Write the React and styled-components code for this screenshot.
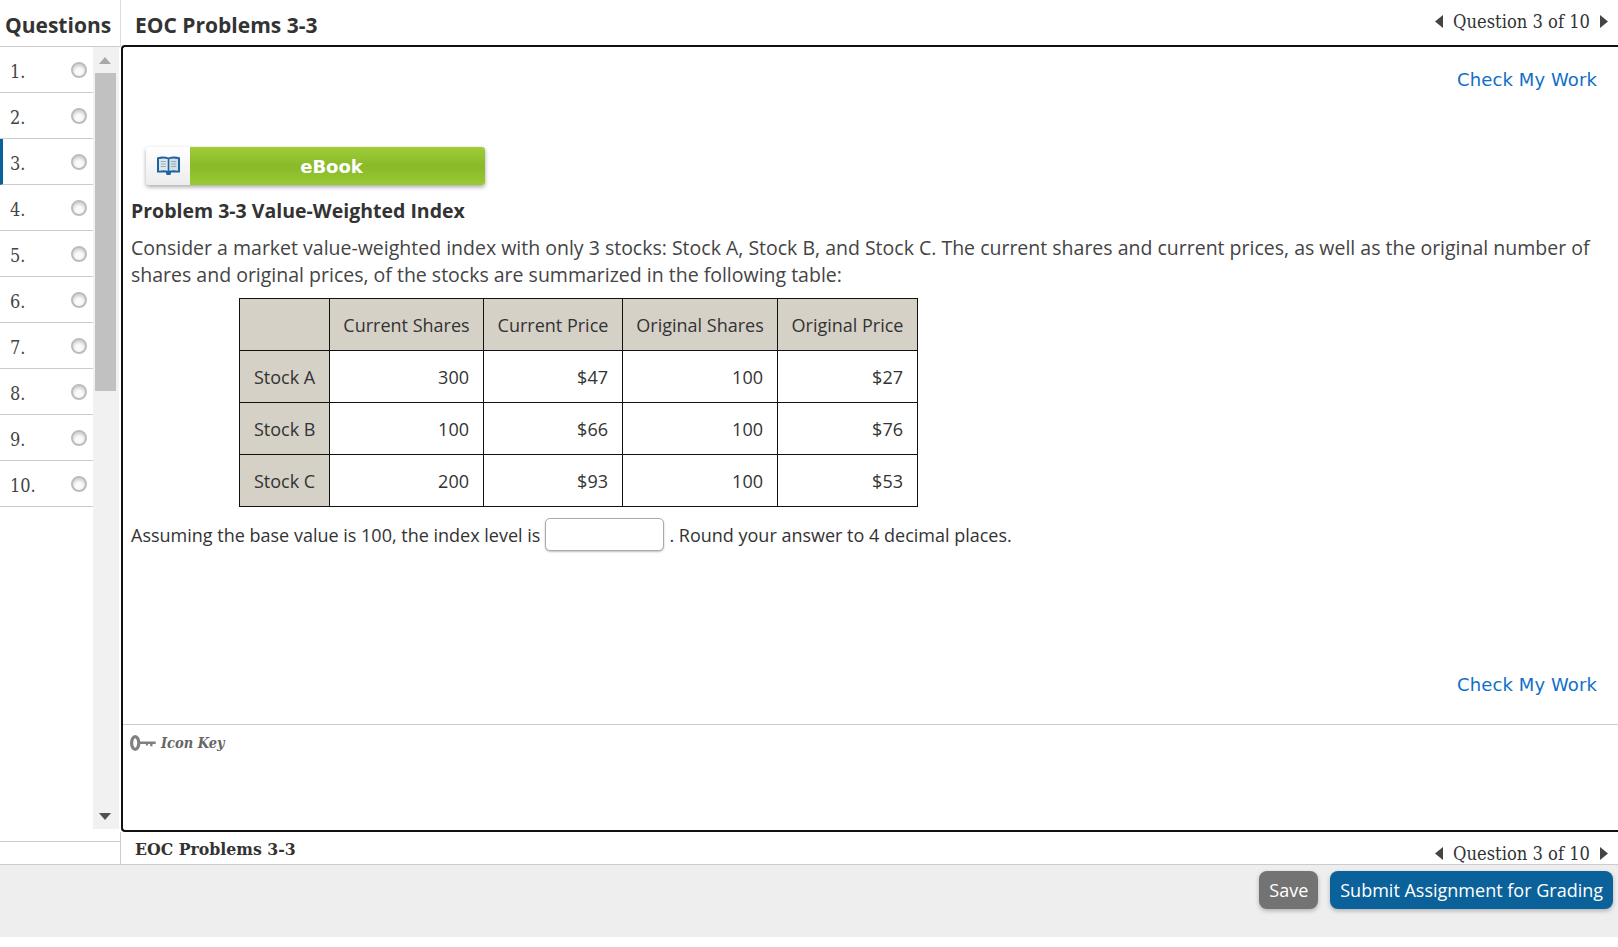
import React from "react";
import styled, { createGlobalStyle } from "styled-components";

const Global = createGlobalStyle`
  html, body { margin: 0; padding: 0; background: #fff; overflow: hidden; }
  #root { height: 947px; }
  * { box-sizing: border-box; }
`;

const Page = styled.div`
  width: 1618px;
  height: 947px;
  display: flex;
  flex-direction: column;
  font-family: "Open Sans", sans-serif;
  color: #333;
`;

const TopRow = styled.header`
  height: 45px;
  flex: none;
  display: flex;
`;

const SideTitle = styled.div`
  width: 121px;
  flex: none;
  padding-left: 5px;
  border-right: 1px solid #ddd;
  border-bottom: 1px solid #ccc;
  height: 47px;
  font-size: 21px;
  font-weight: 700;
  line-height: 50px;
  color: #333;
`;

const HeaderMain = styled.div`
  flex: 1;
  display: flex;
  align-items: center;
  justify-content: space-between;
  padding: 4px 10px 0 14px;
`;

const Title = styled.h1`
  margin: 0;
  font-size: 21px;
  font-weight: 700;
  color: #333;
`;

const Pager = styled.div`
  display: flex;
  align-items: center;
  gap: 10px;
  font-family: "DejaVu Serif", serif;
  font-stretch: condensed;
  font-size: 18.2px;
  color: #333;
  transform: translateY(${(p) => p.$shift || 0}px);
`;

const Arrow = ({ dir }) => (
  <svg width="8" height="13" viewBox="0 0 8 13">
    <path d={dir === "left" ? "M8 0 L0 6.5 L8 13 Z" : "M0 0 L8 6.5 L0 13 Z"} fill="#444" />
  </svg>
);

const Middle = styled.div`
  flex: 1;
  min-height: 0;
  display: flex;
`;

const Sidebar = styled.aside`
  width: 121px;
  flex: none;
  display: flex;
  padding-top: 2px;
  height: 784px;
`;

const QuestionList = styled.ol`
  list-style: none;
  margin: 0;
  padding: 0;
  width: 93px;
  flex: none;
`;

const QuestionRow = styled.li`
  height: 46px;
  display: flex;
  align-items: center;
  justify-content: space-between;
  padding: 4px 6px 0 ${(p) => (p.$active ? 7 : 10)}px;
  border-bottom: 1px solid #ccc;
  border-left: ${(p) => (p.$active ? "3px solid #0b6199" : "none")};
  font-family: "DejaVu Serif", serif;
  font-stretch: condensed;
  font-size: 18px;
  color: #444;
`;

const Radio = styled.span`
  width: 16px;
  height: 16px;
  border-radius: 50%;
  border: 2px solid #bcbcbc;
  background: #fafafa;
  box-shadow: inset 0 2px 3px rgba(0, 0, 0, 0.18);
  margin-top: -3px;
`;

const Track = styled.div`
  width: 26px;
  flex: none;
  background: #f1f1f1;
  display: flex;
  flex-direction: column;
  align-items: center;
  margin-right: 2px;
`;

const TrackBtn = styled.div`
  height: 26px;
  flex: none;
  display: flex;
  align-items: center;
  justify-content: center;
  padding-right: 2px;
`;

const Thumb = styled.div`
  width: 21px;
  height: 318px;
  flex: none;
  background: #c1c1c1;
  margin-right: 1px;
`;

const TrackFill = styled.div`
  flex: 1;
`;

const Frame = styled.main`
  flex: 1;
  height: 787px;
  border: 2px solid #111;
  border-right: none;
  border-radius: 4px 0 0 4px;
  display: flex;
  flex-direction: column;
`;

const CheckRow = styled.div`
  display: flex;
  flex: none;
  justify-content: flex-end;
  padding-right: 21px;
  height: ${(p) => p.$h}px;
  padding-top: ${(p) => p.$pt}px;
`;

const CheckLink = styled.a`
  font-family: "DejaVu Sans", sans-serif;
  font-size: 18px;
  line-height: 22px;
  color: #0f6fc6;
  letter-spacing: 0.1px;
`;

const Content = styled.section`
  flex: 1;
  padding-left: 8px;
  padding-right: 20px;
`;

const EbookBar = styled.div`
  display: flex;
  width: 339px;
  height: 38px;
  margin-left: 15px;
  border-radius: 3px;
  box-shadow: 0 2px 4px rgba(0, 0, 0, 0.35);
  overflow: hidden;
`;

const EbookIcon = styled.div`
  width: 44px;
  flex: none;
  display: flex;
  align-items: center;
  justify-content: center;
  background: linear-gradient(#fff, #ececec);
`;

const EbookLabel = styled.div`
  flex: 1;
  display: flex;
  align-items: center;
  justify-content: center;
  background: linear-gradient(#9fce39, #8ab929 50%, #99c933);
  color: #fff;
  font-family: "DejaVu Sans", sans-serif;
  font-weight: 700;
  font-size: 18px;
  padding: 1px 12px 0 0;
`;

const Heading = styled.h2`
  margin: 12px 0 0;
  font-size: 19.5px;
  line-height: 27px;
  font-weight: 700;
  color: #333;
`;

const Para = styled.p`
  margin: 10px 0 0;
  font-size: 19.5px;
  line-height: 27px;
  color: #444;
`;

const Table = styled.table`
  border-collapse: collapse;
  table-layout: fixed;
  width: 678px;
  margin: 10px 0 0 108px;
  font-size: 18px;
  color: #333;
`;

const Th = styled.th`
  border: 1px solid #111;
  background: #d5d1c7;
  font-weight: 400;
  height: 52px;
  padding: 0 ${(p) => (p.$left ? 14 : 13)}px;
  white-space: nowrap;
  text-align: ${(p) => (p.$left ? "left" : "center")};
  width: ${(p) => p.$w}px;
`;

const Td = styled.td`
  border: 1px solid #111;
  height: 52px;
  padding: 0 14px;
  text-align: right;
`;

const AnswerLine = styled.div`
  display: flex;
  align-items: center;
  margin-top: 11px;
  font-size: 18px;
  color: #333;
`;

const AnswerInput = styled.input`
  width: 119px;
  height: 33px;
  margin: 0 5px;
  border: 1px solid #aaa;
  border-radius: 5px;
  background: #fff;
  box-shadow: 0 1px 2px rgba(0, 0, 0, 0.25);
`;

const KeyRow = styled.div`
  height: 106px;
  flex: none;
  border-top: 1px solid #ccc;
  display: flex;
  align-items: flex-start;
  gap: 5px;
  padding: 9px 0 0 7px;
  font-family: "DejaVu Serif", serif;
  font-stretch: condensed;
  font-style: italic;
  font-weight: 700;
  font-size: 14.5px;
  line-height: 18px;
  color: #666;
`;

const FooterRow = styled.div`
  height: 33px;
  flex: none;
  display: flex;
  border-bottom: 1px solid #ccc;
`;

const FooterSide = styled.div`
  width: 121px;
  flex: none;
  border-right: 1px solid #ccc;
  padding-top: 9px;
`;

const FooterLine = styled.div`
  height: 23px;
  border-top: 1px solid #ccc;
`;

const FooterMain = styled.div`
  flex: 1;
  display: flex;
  justify-content: space-between;
  align-items: flex-end;
  padding: 0 10px 0 14px;
`;

const FooterTitle = styled.div`
  font-family: "DejaVu Serif", serif;
  font-stretch: condensed;
  font-weight: 700;
  font-size: 17.5px;
  line-height: 30px;
  color: #333;
`;

const ActionBar = styled.footer`
  height: 72px;
  flex: none;
  background: #eee;
  display: flex;
  justify-content: flex-end;
  align-items: flex-start;
  gap: 12px;
  padding: 6px 5px 0 0;
`;

const ActionButton = styled.button`
  height: 38px;
  padding: 0 10px;
  border: none;
  border-radius: 8px;
  background: ${(p) => (p.$primary ? "#0b6199" : "#737373")};
  color: #fff;
  font-family: "Open Sans", sans-serif;
  font-size: 18px;
  box-shadow: 0 2px 4px rgba(0, 0, 0, 0.25);
`;

const BottomGap = styled.div`
  height: 10px;
  flex: none;
`;

const BookIcon = () => (
  <svg width="23" height="20" viewBox="0 0 23 20">
    <path d="M0 1.5 Q6 -0.5 11.5 1.5 Q17 -0.5 23 1.5 V16.5 H14 L13.5 19 H9.5 L9 16.5 H0 Z" fill="#1d639f" />
    <path d="M2 3 Q7 1.8 10.7 3 V14.8 Q7 13.8 2 14.8 Z" fill="#dfe8ee" />
    <path d="M21 3 Q16 1.8 12.3 3 V14.8 Q16 13.8 21 14.8 Z" fill="#d3dee6" />
    <path d="M3.8 5.5 h5 M3.8 8 h5 M3.8 10.5 h5 M14.2 5.5 h5 M14.2 8 h5 M14.2 10.5 h5" stroke="#96a7b4" strokeWidth="1.2" />
  </svg>
);

const KeyIcon = () => (
  <svg width="26" height="18" viewBox="0 0 26 18">
    <ellipse cx="5.2" cy="9" rx="3.6" ry="6.4" fill="none" stroke="#808080" strokeWidth="3.2" />
    <path d="M9.5 7.6 h16.2 v2.4 h-3.2 v2.2 h-2.4 v-2.2 h-2 v1.5 h-2.2 v-1.5 h-6.4 Z" fill="#808080" />
  </svg>
);

const ScrollArrow = ({ up }) => (
  <svg width="12" height="7" viewBox="0 0 12 7">
    <path d={up ? "M0 7 L6 0 L12 7 Z" : "M0 0 L6 7 L12 0 Z"} fill={up ? "#a8a8a8" : "#505050"} />
  </svg>
);

const rows = [
  ["Stock A", "300", "$47", "100", "$27"],
  ["Stock B", "100", "$66", "100", "$76"],
  ["Stock C", "200", "$93", "100", "$53"],
];

const PagerBlock = ({ shift }) => (
  <Pager $shift={shift}>
    <Arrow dir="left" />
    <span>Question 3 of 10</span>
    <Arrow dir="right" />
  </Pager>
);

export default function App() {
  return (
    <Page>
      <Global />
      <TopRow>
        <SideTitle>Questions</SideTitle>
        <HeaderMain>
          <Title>EOC Problems 3-3</Title>
          <PagerBlock shift={-3} />
        </HeaderMain>
      </TopRow>
      <Middle>
        <Sidebar>
          <QuestionList>
            {Array.from({ length: 10 }, (_, i) => (
              <QuestionRow key={i} $active={i === 2}>
                <span>{i + 1}.</span>
                <Radio />
              </QuestionRow>
            ))}
          </QuestionList>
          <Track>
            <TrackBtn><ScrollArrow up /></TrackBtn>
            <Thumb />
            <TrackFill />
            <TrackBtn><ScrollArrow /></TrackBtn>
          </Track>
        </Sidebar>
        <Frame>
          <CheckRow $h={100} $pt={22}><CheckLink>Check My Work</CheckLink></CheckRow>
          <Content>
            <EbookBar>
              <EbookIcon><BookIcon /></EbookIcon>
              <EbookLabel>eBook</EbookLabel>
            </EbookBar>
            <Heading>Problem 3-3 Value-Weighted Index</Heading>
            <Para>
              Consider a market value-weighted index with only 3 stocks: Stock A, Stock B, and Stock C. The current shares and current prices, as well as the original number of shares and original prices, of the stocks are summarized in the following table:
            </Para>
            <Table>
              <thead>
                <tr>
                  <Th $w={90} />
                  <Th $w={154}>Current Shares</Th>
                  <Th $w={139}>Current Price</Th>
                  <Th $w={155}>Original Shares</Th>
                  <Th $w={140}>Original Price</Th>
                </tr>
              </thead>
              <tbody>
                {rows.map((r) => (
                  <tr key={r[0]}>
                    <Th $left>{r[0]}</Th>
                    {r.slice(1).map((c, i) => <Td key={i}>{c}</Td>)}
                  </tr>
                ))}
              </tbody>
            </Table>
            <AnswerLine>
              <span>Assuming the base value is 100, the index level is</span>
              <AnswerInput />
              <span>. Round your answer to 4 decimal places.</span>
            </AnswerLine>
          </Content>
          <CheckRow $h={70} $pt={20}><CheckLink>Check My Work</CheckLink></CheckRow>
          <KeyRow><KeyIcon /><span>Icon Key</span></KeyRow>
        </Frame>
      </Middle>
      <FooterRow>
        <FooterSide><FooterLine /></FooterSide>
        <FooterMain>
          <FooterTitle>EOC Problems 3-3</FooterTitle>
          <PagerBlock shift={0} />
        </FooterMain>
      </FooterRow>
      <ActionBar>
        <ActionButton>Save</ActionButton>
        <ActionButton $primary>Submit Assignment for Grading</ActionButton>
      </ActionBar>
      <BottomGap />
    </Page>
  );
}
